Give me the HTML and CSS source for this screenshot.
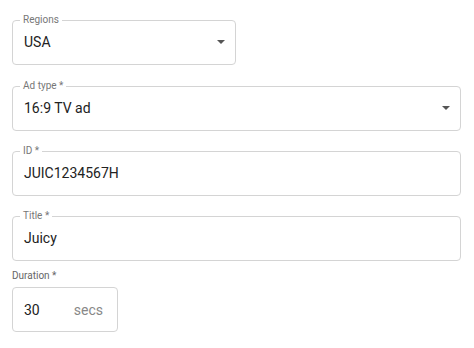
FILE: index.html
```html
<!DOCTYPE html>
<html lang="en">
<head>
    <meta charset="UTF-8">
    <meta name="viewport" content="width=device-width, initial-scale=1.0">
    <title>Ad details</title>
    <link rel="stylesheet" href="styles.css">
</head>
<body>

<form class="ad-form">
    <!-- Regions select -->
    <fieldset class="field field-short">
        <legend>Regions</legend>
        <div class="field-value">
            <span>USA</span>
            <span class="caret"></span>
        </div>
    </fieldset>

    <fieldset class="field">
        <legend>Ad type *</legend>
        <div class="field-value">
            <span>16:9 TV ad</span>
            <span class="caret"></span>
        </div>
    </fieldset>

    <fieldset class="field">
        <legend>ID *</legend>
        <div class="field-value">
            <span>JUIC1234567H</span>
        </div>
    </fieldset>

    <fieldset class="field">
        <legend>Title *</legend>
        <div class="field-value">
            <span>Juicy</span>
        </div>
    </fieldset>

    <!-- Duration has its label outside the box -->
    <div class="duration">
        <label class="duration-label">Duration *</label>
        <div class="duration-box">
            <span>30</span>
            <span class="unit">secs</span>
        </div>
    </div>
</form>

</body>
</html>
```

FILE: styles.css
```css
body {
    font-family: Roboto, "Noto Sans", sans-serif;
    margin: 0;
    padding: 14px 13px 0 12px;
    background-color: #ffffff;
    color: #222;
}

.ad-form {
    display: flex;
    flex-direction: column;
}

.field {
    margin: 0 0 14px;
    padding: 0 11px 0 7px;
    border: 1px solid #d4d4d4;
    border-radius: 4px;
    min-width: 0;
}

.field-short {
    width: 224px;
    box-sizing: border-box;
    margin-bottom: 15px;
}

.field legend {
    font-size: 10px;
    line-height: 12px;
    color: #777;
    padding: 0 3px;
}

.field-value {
    display: flex;
    align-items: center;
    justify-content: space-between;
    height: 32px;
    padding: 0 0 6px 4px;
    font-size: 14px;
}

/* Small dropdown triangle */
.caret {
    width: 0;
    height: 0;
    border-left: 4px solid transparent;
    border-right: 4px solid transparent;
    border-top: 4px solid #555;
    margin-right: -1px;
}

.duration {
    display: flex;
    flex-direction: column;
    margin-top: -5px;
}

.duration-label {
    font-size: 10px;
    line-height: 12px;
    color: #666;
    margin-bottom: 5px;
}

.duration-box {
    display: flex;
    align-items: center;
    gap: 34px;
    width: 106px;
    height: 45px;
    box-sizing: border-box;
    padding: 0 11px;
    border: 1px solid #d4d4d4;
    border-radius: 4px;
    font-size: 14px;
}

.duration-box .unit {
    color: #888;
}
```
